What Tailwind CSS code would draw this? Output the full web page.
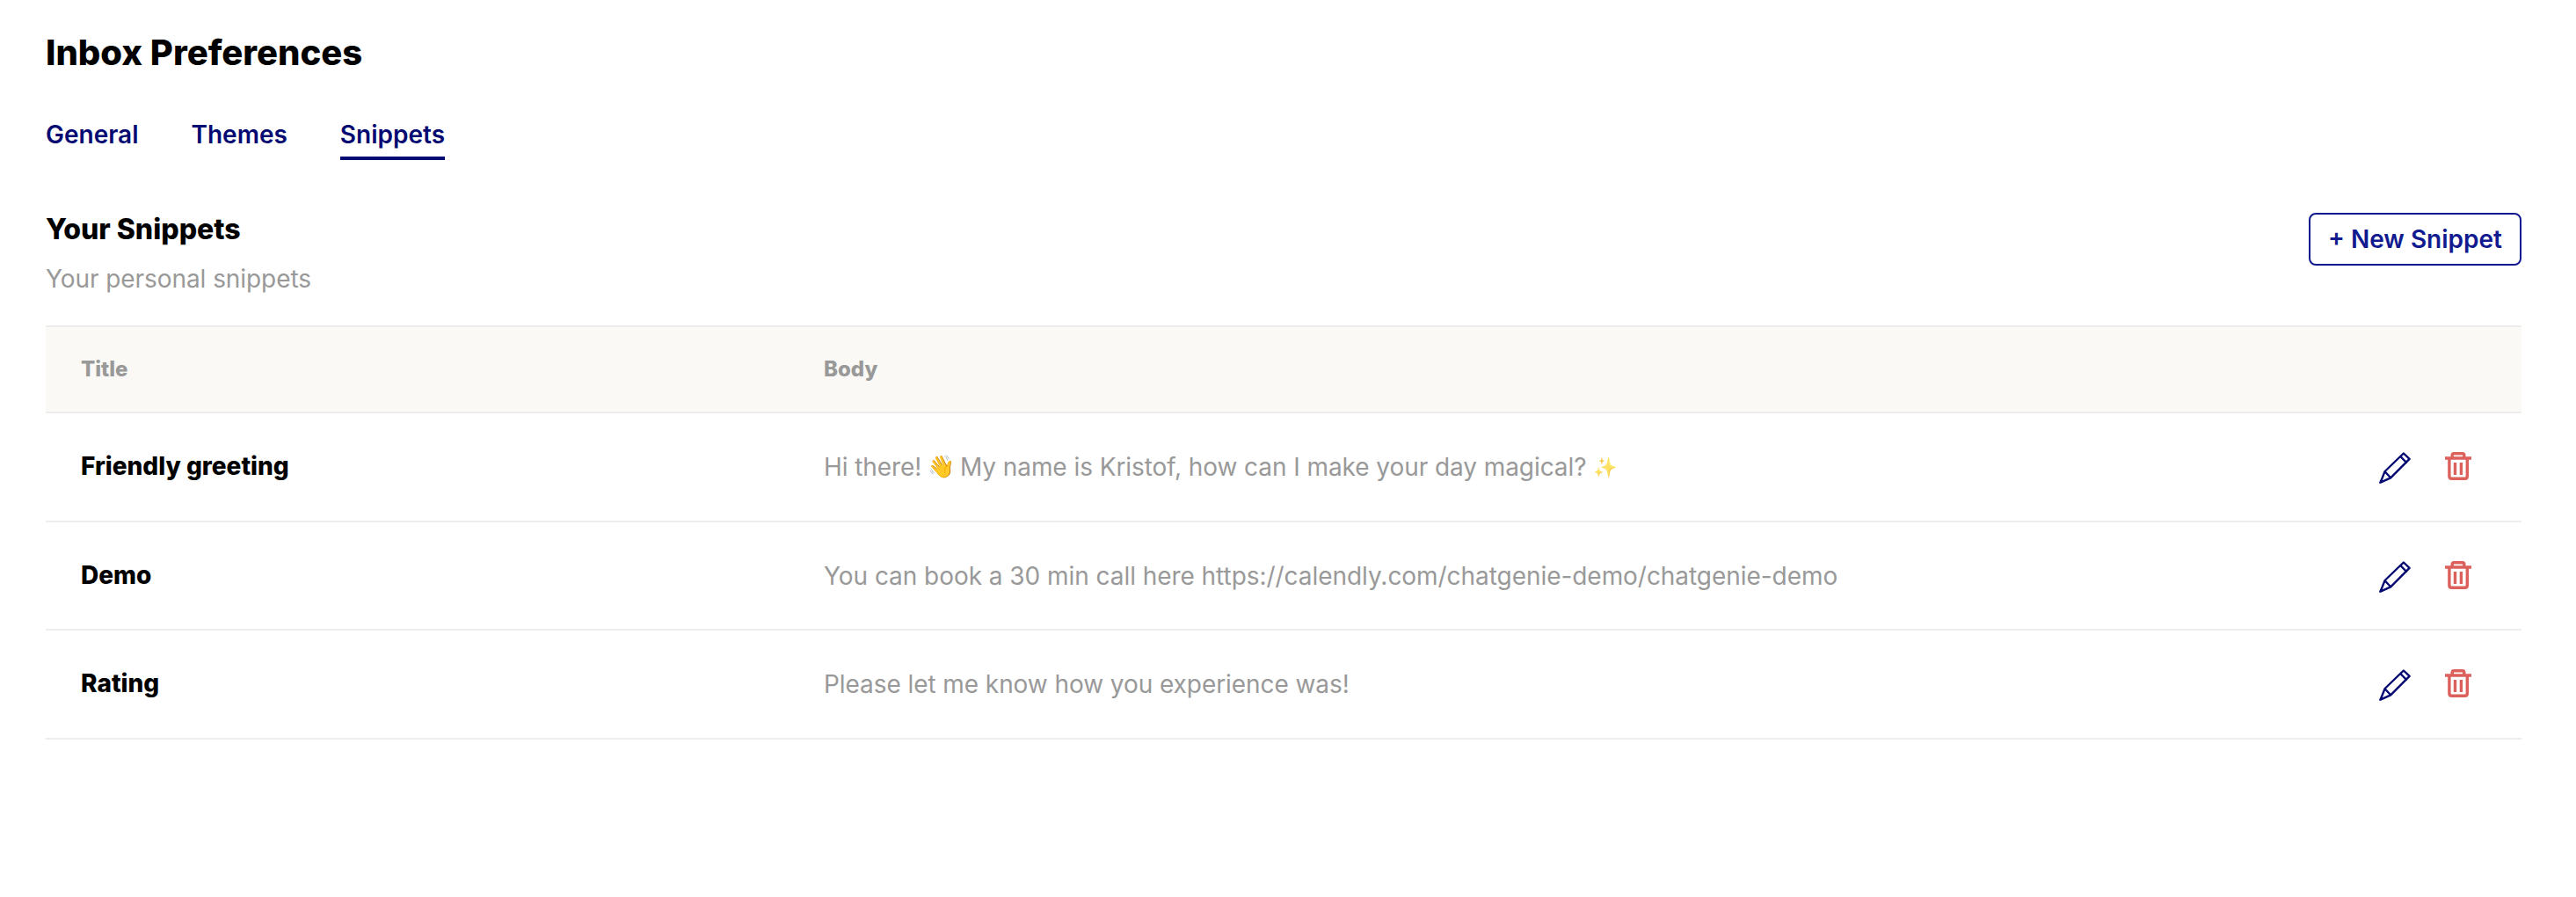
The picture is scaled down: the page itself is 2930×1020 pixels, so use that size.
<!DOCTYPE html>
<html lang="en">
<head>
    <meta charset="UTF-8">
    <meta name="viewport" content="width=device-width, initial-scale=1.0">
    <title>Inbox Preferences</title>
    <script src="https://cdn.jsdelivr.net/npm/@tailwindcss/browser@4"></script>
</head>
<body class="bg-white text-black font-['Inter',sans-serif]">
    <!-- Shared icons -->
    <svg class="hidden">
        <symbol id="pencil" viewBox="0 0 36 36">
            <path d="M1.6 34.6 6.6 22 27.9 1.5 34.6 7.9 13.2 29.4ZM6.6 22.2 13.2 29.2M24.3 5 31 11.8" fill="none" stroke="currentColor" stroke-width="2.4" stroke-linejoin="round" stroke-linecap="round"/>
            <path d="M0 35.8 1.4 31.5 4.4 34.3Z" fill="currentColor"/>
        </symbol>
        <symbol id="trash" viewBox="0 0 30 32">
            <path d="M0 7H30M8.2 7V3.6Q8.2 1.7 10.2 1.7H20Q21.8 1.7 21.8 3.6V7M4.9 7V27.5Q4.9 30.3 7.7 30.3H22.5Q25.3 30.3 25.3 27.5V7M11.5 12V26M18.4 12V26" fill="none" stroke="currentColor" stroke-width="3.4"/>
        </symbol>
    </svg>
    <main class="pl-[52px] pr-[62px] pt-[35px]">
        <h1 class="text-[40px] leading-[50px] font-extrabold">Inbox Preferences</h1>
        <nav class="mt-[48px] flex gap-[60px] text-[28px] leading-[40px] font-semibold text-[#050a72]">
            <a href="#" class="pb-[5px]">General</a>
            <a href="#" class="pb-[5px]">Themes</a>
            <a href="#" class="pb-[5px] border-b-4 border-[#050a72]">Snippets</a>
        </nav>
        <section class="mt-[60px]">
            <div class="flex justify-between items-start h-[128px]">
                <div>
                    <h2 class="text-[32px] leading-[38px] font-extrabold">Your Snippets</h2>
                    <p class="mt-[17px] text-[28px] leading-[40px] tracking-[-0.07px] text-[#999]">Your personal snippets</p>
                </div>
                <button class="h-[60px] w-[242px] border-2 border-[#111a8f] rounded-lg text-[28px] leading-[40px] font-semibold text-[#111a8f] whitespace-nowrap">+ New Snippet</button>
            </div>
            <table class="w-full table-fixed border-separate border-spacing-0 text-left text-[28px] leading-[40px]">
                <thead class="bg-[#faf9f5] text-[24px] text-[#999]">
                    <tr class="h-[100px]">
                        <th class="w-[845px] py-0 pl-10 border-y-2 border-[#ededed] font-extrabold">Title</th>
                        <th class="py-0 pl-10 border-y-2 border-[#ededed] font-extrabold">Body</th>
                        <th class="w-[220px] border-y-2 border-[#ededed]"></th>
                    </tr>
                </thead>
                <tbody>
                    <tr class="h-[124px]">
                        <td class="pt-0 pb-[2px] pl-10 border-b-2 border-[#ededed] font-extrabold">Friendly greeting</td>
                        <td class="py-0 pl-10 border-b-2 border-[#ededed] tracking-[-0.07px] text-[#999]">Hi there! <span class="inline-block w-[28px] -ml-px mr-px text-[25px] leading-none align-[2px]">👋</span> My name is Kristof, how can I make your day magical? <span class="inline-block w-[28px] text-[22px] leading-none align-[2px] opacity-75">✨</span></td>
                        <td class="pt-[2px] pb-0 border-b-2 border-[#ededed]">
                            <div class="flex justify-end gap-[39px] pr-[57px]">
                                <svg class="w-9 h-9 text-[#050a72]"><use href="#pencil"/></svg>
                                <svg class="w-[30px] h-8 text-[#dc605b]"><use href="#trash"/></svg>
                            </div>
                        </td>
                    </tr>
                    <tr class="h-[123px]">
                        <td class="pt-0 pb-[2px] pl-10 border-b-2 border-[#ededed] font-extrabold">Demo</td>
                        <td class="py-0 pl-10 border-b-2 border-[#ededed] tracking-[-0.05px] text-[#999]">You can book a 30 min call here https://calendly.com/chatgenie-demo/chatgenie-demo</td>
                        <td class="pt-[2px] pb-0 border-b-2 border-[#ededed]">
                            <div class="flex justify-end gap-[39px] pr-[57px]">
                                <svg class="w-9 h-9 text-[#050a72]"><use href="#pencil"/></svg>
                                <svg class="w-[30px] h-8 text-[#dc605b]"><use href="#trash"/></svg>
                            </div>
                        </td>
                    </tr>
                    <tr class="h-[124px]">
                        <td class="pt-0 pb-[2px] pl-10 border-b-2 border-[#ededed] font-extrabold">Rating</td>
                        <td class="py-0 pl-10 border-b-2 border-[#ededed] tracking-[-0.07px] text-[#999]">Please let me know how you experience was!</td>
                        <td class="pt-[2px] pb-0 border-b-2 border-[#ededed]">
                            <div class="flex justify-end gap-[39px] pr-[57px]">
                                <svg class="w-9 h-9 text-[#050a72]"><use href="#pencil"/></svg>
                                <svg class="w-[30px] h-8 text-[#dc605b]"><use href="#trash"/></svg>
                            </div>
                        </td>
                    </tr>
                </tbody>
            </table>
        </section>
    </main>
</body>
</html>
